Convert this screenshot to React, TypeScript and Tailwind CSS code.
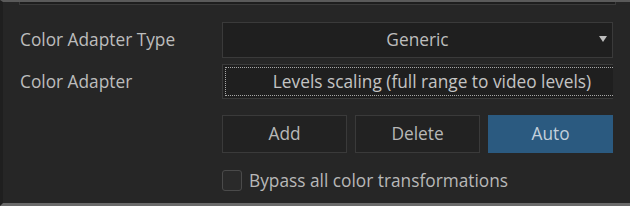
import React, { useState } from 'react';

const font = { fontFamily: '"Open Sans", "Noto Sans", sans-serif' };

const App = () => {
    const [bypass, setBypass] = useState(false);

    return (
        <div
            className="w-[630px] h-[206px] bg-[#262626] border-t-2 border-t-[#5a5a5a] border-b-[3px] border-b-[#6a6a6a] border-l-[3px] border-l-[#1f1f1f] overflow-hidden text-[17.3px] text-[#bdbdbd]"
            style={font}
        >
            {/* tail of the panel above */}
            <div className="ml-[16px] mr-[14px] h-[3px] bg-[#1e1e1e] border-x border-b border-[#3a3a3a]" />

            <div className="pl-[17px] pr-[17px] pt-[17px] flex flex-col">
                {/* Color Adapter Type */}
                <div className="flex items-center h-[36px]">
                    <div className="w-[202px]">Color Adapter Type</div>
                    <div className="relative flex-1 h-full bg-[#1f1f1f] border border-[#3a3a3a] flex items-center justify-center">
                        <span>Generic</span>
                        <svg className="absolute right-[5px] top-[12px]" width="8" height="8" viewBox="0 0 8 8">
                            <path d="M0 1 H8 L4 7 Z" fill="#bdbdbd" />
                        </svg>
                    </div>
                </div>

                {/* Color Adapter (list is wider than the column and gets clipped) */}
                <div className="flex items-center h-[35px] mt-[6px]">
                    <div className="w-[202px] shrink-0">Color Adapter</div>
                    <div className="flex-1 h-full overflow-hidden">
                        <div className="w-[420px] h-full bg-[#1f1f1f] border border-[#3a3a3a] p-[2px]">
                            <div className="h-full border border-dotted border-[#a8a8a8] flex items-center justify-center">
                                <span className="text-[#c4c4c4] whitespace-nowrap">Levels scaling (full range to video levels)</span>
                            </div>
                        </div>
                    </div>
                </div>

                {/* Buttons */}
                <div className="flex mt-[16px] h-[38px]">
                    <div className="w-[202px]" />
                    <div className="flex-1 grid grid-cols-3 gap-[8px]">
                        <button className="bg-[#222222] border border-[#3a3a3a] text-[#b8b8b8]">Add</button>
                        <button className="bg-[#222222] border border-[#3a3a3a] text-[#b8b8b8]">Delete</button>
                        <button className="bg-[#2b5a80] border border-[#2b5a80] text-[#c3d0dc]">Auto</button>
                    </div>
                </div>

                {/* Bypass */}
                <div className="flex items-center mt-[15px]">
                    <div className="w-[202px]" />
                    <label className="flex items-center gap-[7px] cursor-pointer">
                        <span
                            onClick={() => setBypass(!bypass)}
                            className="w-[20px] h-[21px] rounded-[3px] bg-[#2a2a2a] border border-[#4a4a4a] flex items-center justify-center"
                        >
                            {bypass && <span className="w-[10px] h-[10px] bg-[#bdbdbd]" />}
                        </span>
                        <span className="text-[#b8b8b8]">Bypass all color transformations</span>
                    </label>
                </div>
            </div>
        </div>
    );
};

export default App;
